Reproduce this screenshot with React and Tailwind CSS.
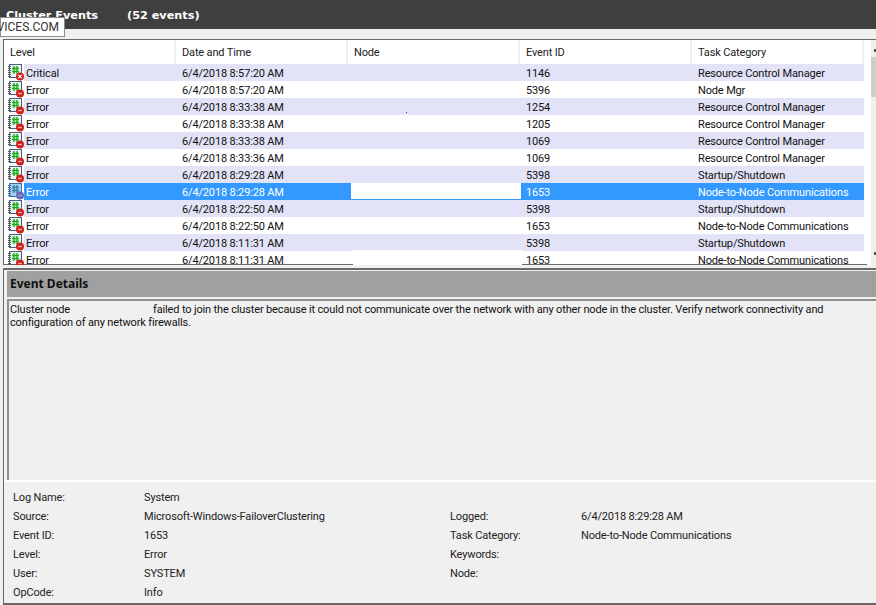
const rows = [
  ["Critical", "6/4/2018 8:57:20 AM", "1146", "Resource Control Manager"],
  ["Error", "6/4/2018 8:57:20 AM", "5396", "Node Mgr"],
  ["Error", "6/4/2018 8:33:38 AM", "1254", "Resource Control Manager"],
  ["Error", "6/4/2018 8:33:38 AM", "1205", "Resource Control Manager"],
  ["Error", "6/4/2018 8:33:38 AM", "1069", "Resource Control Manager"],
  ["Error", "6/4/2018 8:33:36 AM", "1069", "Resource Control Manager"],
  ["Error", "6/4/2018 8:29:28 AM", "5398", "Startup/Shutdown"],
  ["Error", "6/4/2018 8:29:28 AM", "1653", "Node-to-Node Communications"],
  ["Error", "6/4/2018 8:22:50 AM", "5398", "Startup/Shutdown"],
  ["Error", "6/4/2018 8:22:50 AM", "1653", "Node-to-Node Communications"],
  ["Error", "6/4/2018 8:11:31 AM", "5398", "Startup/Shutdown"],
  ["Error", "6/4/2018 8:11:31 AM", "1653", "Node-to-Node Communications"],
];

const details = [
  ["Log Name:", "System", "", ""],
  ["Source:", "Microsoft-Windows-FailoverClustering", "Logged:", "6/4/2018 8:29:28 AM"],
  ["Event ID:", "1653", "Task Category:", "Node-to-Node Communications"],
  ["Level:", "Error", "Keywords:", ""],
  ["User:", "SYSTEM", "Node:", ""],
  ["OpCode:", "Info", "", ""],
];

function EventIcon({ level, selected }) {
  return (
    <svg width="16" height="17" viewBox="0 0 16 17" className="block">
      <rect x="1.500" y="0.500" width="12" height="13" fill={selected ? "#a9cdf2" : "#eef3f8"} stroke={selected ? "#3f6da8" : "#4a6078"} />
      <path d="M0 2.500h3M0 4.500h3M0 6.500h3M0 8.500h3M0 10.500h3M0 12.500h3" stroke={selected ? "#44709f" : "#5a5a5a"} />
      <path d="M6 2v8M9 2v8M4 4.500h7M4 7.500h7" stroke={selected ? "#2f86a8" : "#16b016"} strokeWidth="1.400" />
      <circle cx="12" cy="12.500" r="4" fill={selected ? "#6a6ab8" : "#d01f1f"} />
      {level === "Critical" ? (
        <path d="M10.300 10.800l3.400 3.400M13.700 10.800l-3.400 3.400" stroke="#fff" strokeWidth="1.100" />
      ) : (
        <path d="M10.200 12.500h3.600" stroke={selected ? "#a0a0d8" : "#f3b5b5"} strokeWidth="1.300" />
      )}
    </svg>
  );
}

function EventRow({ row, index }) {
  const selected = index === 7;
  const striped = index % 2 === 0;
  const band = selected ? "bg-[#3399ff] text-white" : striped ? "bg-[#e3e3f7]" : "bg-white";
  return (
    <div className="flex h-[17px] shrink-0 whitespace-nowrap leading-[19px]">
      <div className="relative z-10 w-[20px] shrink-0 pl-[4px]">
        <EventIcon level={row[0]} selected={selected} />
      </div>
      <div className={`flex w-[327px] shrink-0 ${band}`}>
        <span className="w-[158px] pl-[2px]">{row[0]}</span>
        <span>{row[1]}</span>
      </div>
      {selected ? (
        <div className="w-[170px] shrink-0 border-b border-[#3399ff] bg-white" />
      ) : (
        <div className={`relative w-[170px] shrink-0 ${band}`}>
          {index === 2 && <span className="absolute left-[55px] top-[14px] h-px w-px bg-[#333399]" />}
        </div>
      )}
      <div className={`flex w-[343px] shrink-0 ${band}`}>
        <span className="w-[177px] shrink-0 pl-[5px]">{row[2]}</span>
        <span>{row[3]}</span>
      </div>
    </div>
  );
}

export default function App() {
  return (
    <div className="relative flex h-[605px] w-[876px] flex-col overflow-hidden bg-[#f0f0f0] font-['Roboto','Open_Sans',sans-serif] text-[11px] tracking-[-0.15px] text-[#111]">
      <div className="flex h-[29px] shrink-0 items-center bg-[#3f3f3f] pl-[6px] pt-[3px] font-['DejaVu_Sans',sans-serif] text-[11.250px] font-bold tracking-normal text-white">
        <span className="w-[121px]">Cluster Events</span>
        <span>(52 events)</span>
      </div>
      <div className="absolute left-0 top-[17px] flex h-[20px] w-[65px] items-center justify-end border border-[#8c8c8c] bg-white pr-[5px] text-[12px] tracking-normal text-[#333]">
        VICES.COM
      </div>

      <div className="relative ml-[3px] mt-[10px] flex h-[226px] shrink-0 border-l border-t border-[#696969] bg-white">
        <div className="flex w-[868px] shrink-0 flex-col overflow-hidden">
          <div className="flex h-[24px] shrink-0 items-center text-[#222]">
            <span className="h-full w-[172px] border-r-2 border-[#efefef] pl-[6px] leading-[26px]">Level</span>
            <span className="h-full w-[172px] border-r-2 border-[#efefef] pl-[6px] leading-[26px]">Date and Time</span>
            <span className="h-full w-[172px] border-r-2 border-[#efefef] pl-[6px] leading-[26px]">Node</span>
            <span className="h-full w-[172px] border-r-2 border-[#efefef] pl-[6px] leading-[26px]">Event ID</span>
            <span className="h-full w-[172px] border-r-2 border-[#efefef] pl-[6px] leading-[26px]">Task Category</span>
          </div>
          {rows.map((row, i) => (
            <EventRow key={i} row={row} index={i} />
          ))}
        </div>
        <div className="relative ml-[-1px] w-[5px] shrink-0 bg-[#f0f0f0]">
          <span className="absolute left-[3px] top-[9px] h-[3px] w-[2px] bg-[#555]" />
          <span className="absolute left-0 top-[17px] h-[40px] w-full bg-[#cdcdcd]" />
          <span className="absolute left-[3px] top-[212px] h-[3px] w-[2px] bg-[#555]" />
        </div>
        <div className="absolute bottom-0 left-0 h-px w-[349px] bg-[#696969]" />
        <div className="absolute bottom-0 left-[349px] h-[15px] w-[169px] bg-white" />
        <div className="absolute bottom-0 left-[518px] h-px w-[345px] bg-[#696969]" />
      </div>

      <div className="ml-[3px] mt-[3px] flex min-h-0 flex-1 flex-col border-b-2 border-l border-t-2 border-[#696969] pl-[3px] pt-px">
        <div className="flex h-[26px] shrink-0 items-center bg-[#a0a0a0] pl-[3px] font-['Noto_Sans',sans-serif] text-[12px] font-bold tracking-normal text-[#111]">
          Event Details
        </div>
        <div className="mt-[2px] h-[181px] shrink-0 whitespace-nowrap border-l-2 border-t-2 border-[#8f8f8f] pl-px pt-[2px] leading-[13px] text-[#111]">
          Cluster node<span className="inline-block w-[83px]" />failed to join the cluster because it could not communicate over the network with any other node in the cluster. Verify network connectivity and
          <br />
          configuration of any network firewalls.
        </div>
        <div className="ml-[-3px] grid flex-1 grid-cols-[131px_306px_131px_1fr] auto-rows-[19px] border-t-2 border-white pl-[9px] pt-[6px] leading-[19px] text-[#222]">
          {details.map((d) => d.map((cell, i) => <span key={d[0] + i}>{cell}</span>))}
        </div>
      </div>
    </div>
  );
}
